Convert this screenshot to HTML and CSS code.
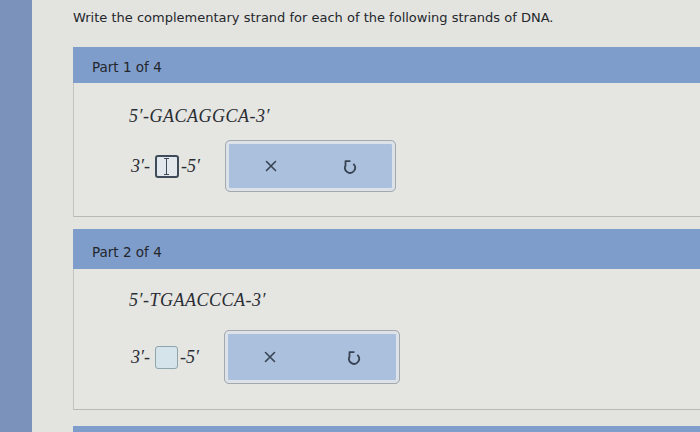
FILE: index.html
```html
<!DOCTYPE html>
<html>
<head>
<meta charset="utf-8">
<link rel="stylesheet" href="styles.css">
</head>
<body>
<div class="strip"></div>
<main class="main">
  <p class="title">Write the complementary strand for each of the following strands of DNA.</p>

  <section class="card">
    <div class="card-head">Part 1 of 4</div>
    <div class="card-body">
      <div class="strand">5′-GACAGGCA-3′</div>
      <div class="answer-row">
        <span class="math">3′-</span><span class="box active"><span class="ibeam"></span></span><span class="math">-5′</span>
        <div class="tools">
          <span class="tool">
            <svg class="icon-x" viewBox="0 0 14 14"><path d="M2.5 2.5 L11.5 11.5 M11.5 2.5 L2.5 11.5" stroke="#374353" stroke-width="1.6" fill="none" stroke-linecap="round"/></svg>
          </span>
          <span class="tool">
            <svg class="icon-undo" viewBox="0 0 14 16"><path d="M6.8 3.6 H3 V8 M2.8 8 A4.5 4.5 0 1 0 10.4 6.6" stroke="#374353" stroke-width="1.6" fill="none" stroke-linecap="round" stroke-linejoin="round"/></svg>
          </span>
        </div>
      </div>
    </div>
  </section>

  <section class="card second">
    <div class="card-head">Part 2 of 4</div>
    <div class="card-body">
      <div class="strand">5′-TGAACCCA-3′</div>
      <div class="answer-row">
        <span class="math">3′-</span><span class="box"></span><span class="math">-5′</span>
        <div class="tools">
          <span class="tool">
            <svg class="icon-x" viewBox="0 0 14 14"><path d="M2.5 2.5 L11.5 11.5 M11.5 2.5 L2.5 11.5" stroke="#374353" stroke-width="1.6" fill="none" stroke-linecap="round"/></svg>
          </span>
          <span class="tool">
            <svg class="icon-undo" viewBox="0 0 14 16"><path d="M6.8 3.6 H3 V8 M2.8 8 A4.5 4.5 0 1 0 10.4 6.6" stroke="#374353" stroke-width="1.6" fill="none" stroke-linecap="round" stroke-linejoin="round"/></svg>
          </span>
        </div>
      </div>
    </div>
  </section>

  <section class="card third">
    <div class="card-head"></div>
  </section>
</main>
</body>
</html>
```

FILE: styles.css
```css
html, body {
  margin: 0;
  padding: 0;
  height: 100%;
  overflow: hidden;
}
body {
  display: flex;
  background: #e3e3df;
  font-family: "DejaVu Sans", Verdana, sans-serif;
  color: #2b2f36;
}
.strip {
  width: 32px;
  flex: none;
  background: #7b93ba;
}
.main {
  flex: 1;
  padding-left: 41px;
  min-width: 0;
}
.title {
  margin: 10px 0 0 0;
  font-size: 13px;
  line-height: 16px;
  color: #24272c;
}
.card {
  margin-top: 21px;
  margin-right: -20px;
}
.card + .card {
  margin-top: 12px;
}
.card.third {
  margin-top: 16px;
}
.card-head {
  height: 36px;
  background: #7f9dca;
  padding-left: 19px;
  display: flex;
  align-items: center;
  font-size: 13.5px;
  color: #23262c;
  padding-top: 4px;
  box-sizing: border-box;
}
.second .card-head {
  height: 40px;
  padding-top: 6px;
}
.card-body {
  height: 134px;
  border-left: 1px solid #c3c3c0;
  border-bottom: 1px solid #b9b9b6;
  box-sizing: border-box;
  padding: 23px 0 0 55px;
  background: #e5e5e2;
}
.second .card-body {
  height: 141px;
  padding-top: 21px;
}
.strand {
  font-family: "Liberation Serif", "Times New Roman", serif;
  font-style: italic;
  font-size: 18px;
  line-height: 20px;
  letter-spacing: 0.5px;
  color: #2a2d33;
}
.answer-row {
  display: flex;
  align-items: center;
  margin-top: 14px;
  padding-left: 2px;
}
.second .answer-row {
  margin-top: 20px;
}
.math {
  font-family: "Liberation Serif", "Times New Roman", serif;
  font-style: italic;
  font-size: 18px;
  color: #2a2d33;
}
.box {
  width: 21px;
  height: 21px;
  border: 1.5px solid #8fa5ab;
  border-radius: 3px;
  background: #d5e3ea;
  margin: 0 2px 0 5px;
  position: relative;
}
.box.active {
  width: 20px;
  height: 19px;
  border: 2px solid #3f4b59;
  background: #e2e8ec;
}
.ibeam {
  position: absolute;
  left: 9.5px;
  top: 1px;
  width: 1px;
  height: 17px;
  background: #3f4b59;
}
.ibeam::before, .ibeam::after {
  content: "";
  position: absolute;
  left: -2px;
  width: 5px;
  height: 1px;
  background: #3f4b59;
}
.ibeam::before { top: 0; }
.ibeam::after { bottom: 0; }
.tools {
  margin-left: 25px;
  width: 171px;
  height: 52px;
  box-sizing: border-box;
  border: 1.5px solid #a4a9ae;
  border-radius: 5px;
  background: #aac0dc;
  box-shadow: inset 0 0 0 3px #dde2e8;
  display: flex;
  align-items: center;
  justify-content: center;
  gap: 49px;
}
.second .tools {
  width: 176px;
  height: 54px;
  gap: 54px;
}
.tool {
  display: flex;
  align-items: center;
  justify-content: center;
  width: 30px;
  height: 30px;
}
.icon-x {
  width: 14px;
  height: 14px;
}
.icon-undo {
  width: 16px;
  height: 18px;
}
```
